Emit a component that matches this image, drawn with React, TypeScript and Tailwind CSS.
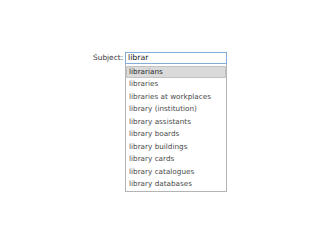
import React from 'react';

const ITEMS = [
  'librarians',
  'libraries',
  'libraries at workplaces',
  'library (institution)',
  'library assistants',
  'library boards',
  'library buildings',
  'library cards',
  'library catalogues',
  'library databases',
];

export default function App() {
  return (
    <div className="w-[320px] h-[240px] bg-white pt-[52px] pl-[93px]" style={{ fontFamily: '"DejaVu Sans", sans-serif' }}>
      <div className="flex items-start">
        <label className="w-[32px] text-[7.4px] leading-[12px] text-[#3a3a3a]">Subject:</label>
        <div className="flex flex-col w-[102px]">
          <div className="h-[12px] border border-[#84acd8] bg-white px-[2px] text-[7.8px] leading-[10px] text-[#1a1a1a]">
            librar
          </div>
          <ul className="border border-[#b4b4b4] border-t-0 bg-white pt-[2px] pb-[1px]">
            {ITEMS.map((item, i) => (
              <li
                key={item}
                className={
                  i === 0
                    ? 'h-[12.44px] leading-[10.4px] pl-[2px] text-[7.25px] text-[#2a2a2a] bg-[#dadada] border border-[#c2c2c2] rounded-[1px]'
                    : 'h-[12.44px] leading-[12.44px] pl-[3px] text-[7.25px] text-[#4a4a4a]'
                }
              >
                {item}
              </li>
            ))}
          </ul>
        </div>
      </div>
    </div>
  );
}
